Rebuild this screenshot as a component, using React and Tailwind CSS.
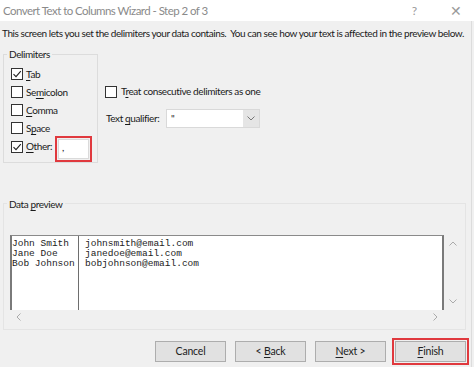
import React, { useState } from 'react';

const font = { fontFamily: 'Lato, "Noto Sans", sans-serif' };

const Check = ({ checked, onChange }) => (
  <button
    onClick={onChange}
    className="w-[12px] h-[12px] border border-[#333333] bg-white flex items-center justify-center shrink-0"
  >
    {checked && (
      <svg width="10" height="10" viewBox="0 0 10 10">
        <path d="M1.5 5.2 L4 7.6 L8.8 2.2" stroke="#222" strokeWidth="1.1" fill="none" />
      </svg>
    )}
  </button>
);

// label with one underlined access key
const Label = ({ text, u }) => {
  const i = text.indexOf(u);
  return (
    <span>
      {text.slice(0, i)}
      <span className="underline underline-offset-2">{u}</span>
      {text.slice(i + 1)}
    </span>
  );
};

const Btn = ({ children, className = '' }) => (
  <button className={`w-[71px] h-[21px] bg-[#e1e1e1] border border-[#adadad] text-[10.5px] text-[#222] ${className}`}>
    {children}
  </button>
);

const App = () => {
  const [delims, setDelims] = useState({ Tab: true, Semicolon: false, Comma: false, Space: false, Other: true });
  const [consecutive, setConsecutive] = useState(false);

  const rows = [
    ['Tab', 'T'],
    ['Semicolon', 'm'],
    ['Comma', 'C'],
    ['Space', 'p'],
  ];

  const data = [
    ['John Smith', 'johnsmith@email.com'],
    ['Jane Doe', 'janedoe@email.com'],
    ['Bob Johnson', 'bobjohnson@email.com'],
  ];

  return (
    <div className="w-[474px] h-[367px] bg-[#f0f0f0] overflow-hidden text-[#1a1a1a] relative" style={font}>
      {/* title bar */}
      <div className="h-[21px] bg-white flex items-center pl-[3px] pr-[12px]">
        <div className="text-[11.5px] tracking-[-0.55px] text-[#8a8a8a]">Convert Text to Columns Wizard - Step 2 of 3</div>
        <div className="ml-auto text-[12px] text-[#9a9a9a]">?</div>
        <div className="ml-[33px] text-[14px] text-[#9a9a9a] font-light">✕</div>
      </div>

      <div className="pl-[2px] pt-[5px] text-[10px] leading-[14px] tracking-[-0.43px] whitespace-nowrap">
        This screen lets you set the delimiters your data contains.&nbsp; You can see how your text is affected in the preview below.
      </div>

      <div className="flex mt-[14px] text-[10px] tracking-[-0.4px]">
        {/* Delimiters group */}
        <div className="ml-[3px] w-[95px] h-[109px] border border-[#dcdcdc] relative pt-[13px] pl-[7px]">
          <div className="absolute -top-[8px] left-[3px] px-[2px] bg-[#f0f0f0]">Delimiters</div>
          <div className="flex flex-col gap-[6px]">
            {rows.map(([name, u]) => (
              <div key={name} className="flex items-center h-[12px]">
                <Check checked={delims[name]} onChange={() => setDelims({ ...delims, [name]: !delims[name] })} />
                <span className="ml-[3px]"><Label text={name} u={u} /></span>
              </div>
            ))}
            <div className="flex items-center h-[13px]">
              <Check checked={delims.Other} onChange={() => setDelims({ ...delims, Other: !delims.Other })} />
              <span className="ml-[3px]"><Label text="Other:" u="O" /></span>
              <div className="ml-auto mr-[5px] mt-[4px] w-[37px] h-[26px] border-2 border-[#e0393e] flex items-center justify-center shrink-0">
                <div className="w-[31px] h-[20px] bg-white border border-[#dadada] text-[10px] leading-[14px] pl-[3px]">,</div>
              </div>
            </div>
          </div>
        </div>

        {/* options */}
        <div className="ml-[7px] pt-[30px]">
          <div className="flex items-center">
            <Check checked={consecutive} onChange={() => setConsecutive(!consecutive)} />
            <span className="ml-[4px] whitespace-nowrap"><Label text="Treat consecutive delimiters as one" u="r" /></span>
          </div>
          <div className="flex items-center mt-[10px]">
            <span className="ml-[1px] w-[60px] whitespace-nowrap"><Label text="Text qualifier:" u="q" /></span>
            <div className="w-[94px] h-[19px] bg-white border border-[#d9d9d9] flex">
              <div className="flex-1 pl-[4px] leading-[16px]">"</div>
              <div className="w-[16px] bg-[#e5e5e5] flex items-center justify-center">
                <svg width="8" height="5" viewBox="0 0 8 5">
                  <path d="M0.5 0.5 L4 4 L7.5 0.5" stroke="#777" strokeWidth="1" fill="none" />
                </svg>
              </div>
            </div>
          </div>
        </div>
      </div>

      {/* Data preview */}
      <div className="ml-[3px] mt-[40px] w-[463px] h-[127px] border border-[#e4e4e4] relative">
        <div className="absolute -top-[7px] left-[3px] px-[2px] bg-[#f0f0f0] text-[10px] leading-[14px] tracking-[-0.4px]">
          Data <Label text="preview" u="p" />
        </div>
        <div className="flex ml-[6px] mt-[31px]">
          <div className="w-[434px]">
            <div className="h-[75px] bg-white border-l-2 border-r-2 border-t border-[#7a7a7a] border-t-[#8a8a8a] flex" style={{ fontFamily: '"Liberation Mono", "Courier New", monospace' }}>
              <div className="w-[67px] border-r border-[#6e6e6e] pt-[3px] text-[9.5px] leading-[10px] text-[#222]">
                {data.map(([n]) => <div key={n} className="whitespace-pre">{n}</div>)}
              </div>
              <div className="pl-[6px] pt-[3px] text-[9.5px] leading-[10px] text-[#222]">
                {data.map(([n, e]) => <div key={n}>{e}</div>)}
              </div>
            </div>
            <div className="h-[14px] flex items-center justify-between px-[6px]">
              <svg width="5" height="8" viewBox="0 0 5 8"><path d="M4.5 0.5 L1 4 L4.5 7.5" stroke="#aaa" fill="none" /></svg>
              <svg width="5" height="8" viewBox="0 0 5 8"><path d="M0.5 0.5 L4 4 L0.5 7.5" stroke="#aaa" fill="none" /></svg>
            </div>
          </div>
          <div className="w-[17px] h-[75px] flex flex-col items-center justify-between py-[6px]">
            <svg width="8" height="5" viewBox="0 0 8 5"><path d="M0.5 4.5 L4 1 L7.5 4.5" stroke="#aaa" fill="none" /></svg>
            <svg width="8" height="5" viewBox="0 0 8 5"><path d="M0.5 0.5 L4 4 L7.5 0.5" stroke="#aaa" fill="none" /></svg>
          </div>
        </div>
      </div>

      {/* buttons */}
      <div className="flex justify-end items-center gap-[9px] pr-[8px] mt-[11px] tracking-[-0.2px]">
        <Btn>Cancel</Btn>
        <Btn>&lt; <Label text="Back" u="B" /></Btn>
        <Btn className="border-[#0078d7]"><Label text="Next" u="N" /> &gt;</Btn>
        <Btn className="outline-2 outline-[#e0393e] outline-offset-1"><Label text="Finish" u="F" /></Btn>
      </div>

      <div className="absolute top-[21px] right-[2px] bottom-0 w-px bg-[#dcdcdc]" />
    </div>
  );
};

export default App;
